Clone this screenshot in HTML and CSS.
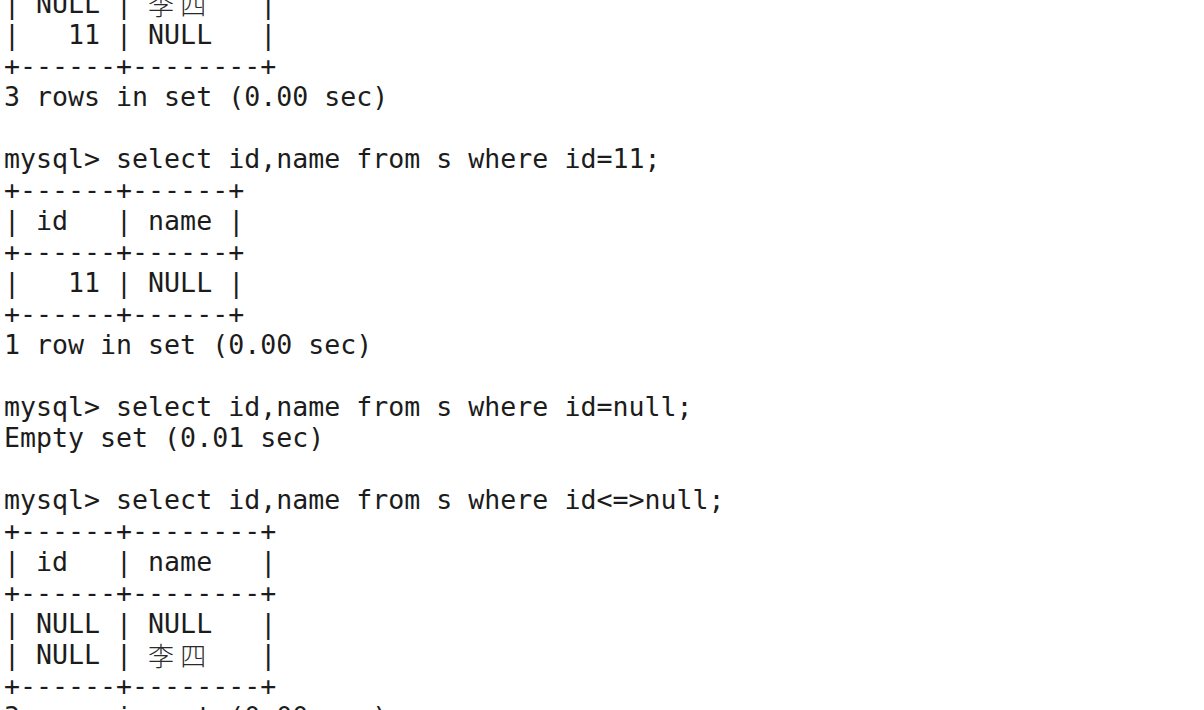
FILE: index.html
```html
<!DOCTYPE html>
<html>
<head>
<meta charset="utf-8">
<link rel="stylesheet" href="styles.css">
</head>
<body>
<pre class="term">| NULL | <span class="cjk">李</span><span class="cjk">四</span>   |
|   11 | NULL   |
+------+--------+
3 rows in set (0.00 sec)

mysql&gt; select id,name from s where id=11;
+------+------+
| id   | name |
+------+------+
|   11 | NULL |
+------+------+
1 row in set (0.00 sec)

mysql&gt; select id,name from s where id=null;
Empty set (0.01 sec)

mysql&gt; select id,name from s where id&lt;=&gt;null;
+------+--------+
| id   | name   |
+------+--------+
| NULL | NULL   |
| NULL | <span class="cjk">李</span><span class="cjk">四</span>   |
+------+--------+
3 rows in set (0.00 sec)</pre>
</body>
</html>
```
FILE: styles.css
```css
html, body {
  margin: 0;
  padding: 0;
  background: #ffffff;
  overflow: hidden;
  height: 710px;
}
.term {
  margin: -12px 0 0 0;
  padding: 0 0 0 4px;
  font-family: "DejaVu Sans Mono", monospace;
  font-size: 26.6px;
  line-height: 31px;
  color: #1c1c1c;
  white-space: pre;
}
.cjk {
  display: inline-block;
  width: 32.03px;
  text-align: left;
  font-family: "Noto Sans CJK SC", sans-serif;
  font-size: 26px;
  font-weight: 300;
  color: #2a2a2a;
  line-height: 31px;
  vertical-align: top;
}
```
